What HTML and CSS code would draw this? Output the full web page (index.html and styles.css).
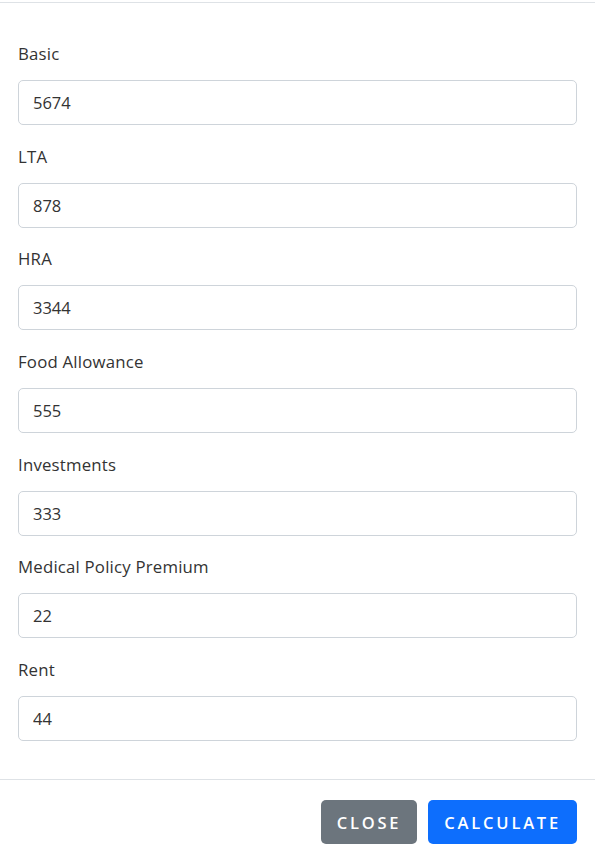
FILE: index.html
```html
<!DOCTYPE html>
<html lang="en">
<head>
<meta charset="utf-8">
<title>Calculator</title>
<link rel="stylesheet" href="styles.css">
</head>
<body>
<div class="modal">
  <div class="modal-header"></div>
  <div class="modal-body">
    <div class="field">
      <label class="field-label" for="basic">Basic</label>
      <input class="field-input" id="basic" type="text" value="5674">
    </div>
    <div class="field">
      <label class="field-label" for="lta">LTA</label>
      <input class="field-input" id="lta" type="text" value="878">
    </div>
    <div class="field">
      <label class="field-label" for="hra">HRA</label>
      <input class="field-input" id="hra" type="text" value="3344">
    </div>
    <div class="field">
      <label class="field-label" for="food">Food Allowance</label>
      <input class="field-input" id="food" type="text" value="555">
    </div>
    <div class="field">
      <label class="field-label" for="inv">Investments</label>
      <input class="field-input" id="inv" type="text" value="333">
    </div>
    <div class="field">
      <label class="field-label" for="med">Medical Policy Premium</label>
      <input class="field-input" id="med" type="text" value="22">
    </div>
    <div class="field">
      <label class="field-label" for="rent">Rent</label>
      <input class="field-input" id="rent" type="text" value="44">
    </div>
  </div>
  <div class="modal-footer">
    <button class="btn btn-secondary" type="button">Close</button>
    <button class="btn btn-primary" type="button">Calculate</button>
  </div>
</div>
</body>
</html>
```
FILE: styles.css
```css
* { box-sizing: border-box; }
html, body {
  margin: 0;
  padding: 0;
  background: #fff;
}
body {
  font-family: "Open Sans", "Noto Sans", sans-serif;
  color: #333;
}
.modal {
  width: 595px;
}
.modal-header {
  height: 3px;
  border-bottom: 1px solid #dee2e6;
}
.modal-body {
  padding: 39px 18px 38.5px;
}
.field {
  margin-bottom: 19.67px;
}
.field:last-child {
  margin-bottom: 0;
}
.field-label {
  display: block;
  font-size: 16.8px;
  letter-spacing: 0.2px;
  line-height: 24px;
  margin-bottom: 14px;
  color: #333;
}
.field-input {
  display: block;
  width: 100%;
  height: 45px;
  padding: 0 14px;
  border: 1px solid #ced4da;
  border-radius: 5px;
  font-family: inherit;
  font-size: 16.5px;
  color: #333;
  background: #fff;
}
.modal-footer {
  border-top: 1px solid #dee2e6;
  padding: 20px 18px 16px;
  display: flex;
  justify-content: flex-end;
  gap: 11px;
}
.btn {
  height: 44px;
  padding: 0 16px;
  border: none;
  border-radius: 5px;
  color: #fff;
  font-family: inherit;
  font-size: 16.5px;
  font-weight: 600;
  letter-spacing: 2.8px;
  text-transform: uppercase;
}
.btn-secondary { background: #6c757d; }
.btn-primary { background: #0d6efd; }
```
